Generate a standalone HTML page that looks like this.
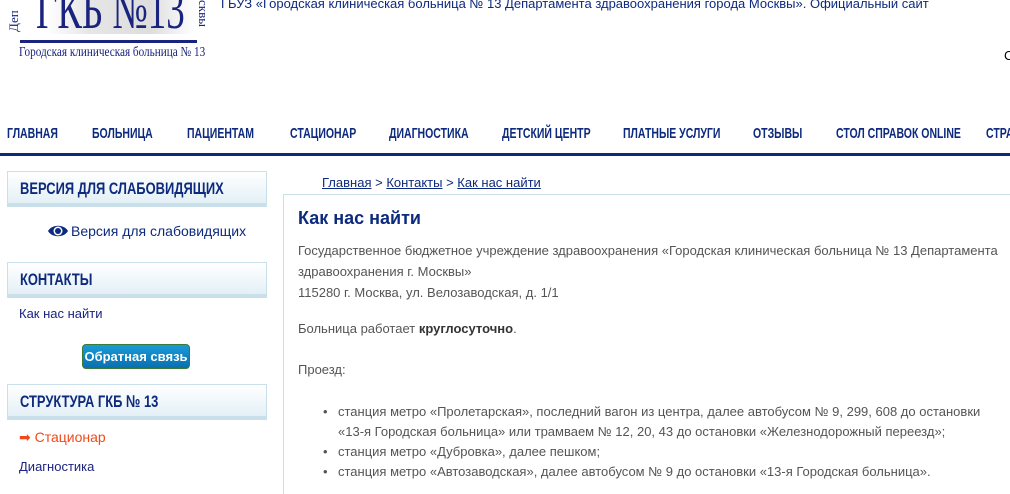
<!DOCTYPE html>
<html><head><meta charset="utf-8"><style>
*{margin:0;padding:0;box-sizing:border-box}
body{width:1010px;height:489px;overflow:hidden;background:#fff;font-family:"Liberation Sans",sans-serif;position:relative}
.a{position:absolute;white-space:nowrap}
.nav{top:125px;font-size:15px;color:#0d2a7e;font-weight:bold;transform:scaleX(.7);transform-origin:left}
.ph{position:absolute;left:7px;width:260px;height:36px;border:1px solid #c9e0ea;border-bottom:4px solid #c9e0ea;background:linear-gradient(#fff,#e3f0f6);}
.ph span{position:absolute;left:12px;top:7px;font-size:17px;font-weight:bold;color:#0d2a7e;transform:scaleX(.76);transform-origin:left;white-space:nowrap}
.t{font-size:13px;color:#555}
</style></head><body>
<div class="a" style="left:45px;top:0;width:150px;height:34px;background:linear-gradient(90deg,#fff,#e6e6e6 30%,#ddd 70%,#fff)"></div>
<div class="a" style="left:36px;top:-22px;font-family:'Liberation Serif',serif;font-size:56px;color:#1a237e;transform:scaleX(.66);transform-origin:left">ГКБ №13</div>
<div class="a" style="left:6px;top:32px;font-family:'Liberation Serif',serif;font-size:13px;color:#1a237e;transform:rotate(-90deg);transform-origin:left top">Деп</div>
<div class="a" style="left:211px;top:0;font-family:'Liberation Serif',serif;font-size:13px;color:#1a237e;transform:rotate(90deg);transform-origin:left top">сквы</div>
<div class="a" style="left:20px;top:40px;width:177px;height:3px;background:#1a237e"></div>
<div class="a" style="left:19px;top:45px;font-family:'Liberation Serif',serif;font-size:14px;color:#1a237e;transform:scaleX(.8);transform-origin:left">Городская клиническая больница № 13</div>
<div class="a" style="left:221px;top:-4px;font-size:13px;color:#0d2a7e">ГБУЗ «Городская клиническая больница № 13 Департамента здравоохранения города Москвы». Официальный сайт</div>
<div class="a" style="left:1004px;top:48px;font-size:13px;color:#000">С</div>
<div class="a nav" style="left:7px">ГЛАВНАЯ</div>
<div class="a nav" style="left:92px">БОЛЬНИЦА</div>
<div class="a nav" style="left:187px">ПАЦИЕНТАМ</div>
<div class="a nav" style="left:290px">СТАЦИОНАР</div>
<div class="a nav" style="left:389px">ДИАГНОСТИКА</div>
<div class="a nav" style="left:502px">ДЕТСКИЙ ЦЕНТР</div>
<div class="a nav" style="left:623px">ПЛАТНЫЕ УСЛУГИ</div>
<div class="a nav" style="left:753px">ОТЗЫВЫ</div>
<div class="a nav" style="left:836px">СТОЛ СПРАВОК ONLINE</div>
<div class="a nav" style="left:986px">СТРАНИЦЫ</div>
<div class="a" style="left:0;top:153px;width:1010px;height:3px;background:#0d2a7e"></div>
<div class="ph" style="top:171px"><span>ВЕРСИЯ ДЛЯ СЛАБОВИДЯЩИХ</span></div>
<svg class="a" style="left:47px;top:223px" width="22" height="16" viewBox="0 0 22 16"><path d="M1 8C5 1 17 1 21 8C17 15 5 15 1 8Z" fill="#0d2a7e"/><circle cx="11" cy="8" r="4.5" fill="#fff"/><circle cx="11" cy="8" r="3" fill="#0d2a7e"/></svg>
<div class="a" style="left:71px;top:223px;font-size:14px;color:#0d2a7e">Версия для слабовидящих</div>
<div class="ph" style="top:262px"><span>КОНТАКТЫ</span></div>
<div class="a" style="left:19px;top:306px;font-size:13px;color:#1a237e">Как нас найти</div>
<div class="a" style="left:82px;top:344px;width:108px;height:25px;border-radius:4px;border:1px solid #3a7a3a;background:linear-gradient(#1a9ad6,#0a6fb0);color:#fff;font-size:13px;font-weight:bold;text-align:center;line-height:23px">Обратная связь</div>
<div class="ph" style="top:384px"><span>СТРУКТУРА ГКБ № 13</span></div>
<div class="a" style="left:19px;top:429px;font-size:14px;color:#f04a1a">➡ Стационар</div>
<div class="a" style="left:19px;top:459px;font-size:13px;color:#1a237e">Диагностика</div>
<div class="a" style="left:322px;top:175px;font-size:13px;color:#0d2a7e"><u>Главная</u> &gt; <u>Контакты</u> &gt; <u>Как нас найти</u></div>
<div class="a" style="left:283px;top:194px;width:740px;height:300px;border-left:1px solid #c9e0ea;border-top:1px solid #c9e0ea"></div>
<div class="a" style="left:298px;top:208px;font-size:18px;font-weight:bold;color:#0d2a7e">Как нас найти</div>
<div class="a t" style="left:298px;top:240px;line-height:21px">Государственное бюджетное учреждение здравоохранения «Городская клиническая больница № 13 Департамента<br>здравоохранения г. Москвы»<br>115280 г. Москва, ул. Велозаводская, д. 1/1</div>
<div class="a t" style="left:298px;top:321px">Больница работает <b style="color:#333">круглосуточно</b>.</div>
<div class="a t" style="left:298px;top:362px">Проезд:</div>
<div class="a t" style="left:338px;top:402px;line-height:20px">станция метро «Пролетарская», последний вагон из центра, далее автобусом № 9, 299, 608 до остановки<br>«13-я Городская больница» или трамваем № 12, 20, 43 до остановки «Железнодорожный переезд»;<br>станция метро «Дубровка», далее пешком;<br>станция метро «Автозаводская», далее автобусом № 9 до остановки «13-я Городская больница».</div>
<div class="a t" style="left:323px;top:402px;line-height:20px">•<br><br>•<br>•</div>
</body></html>
